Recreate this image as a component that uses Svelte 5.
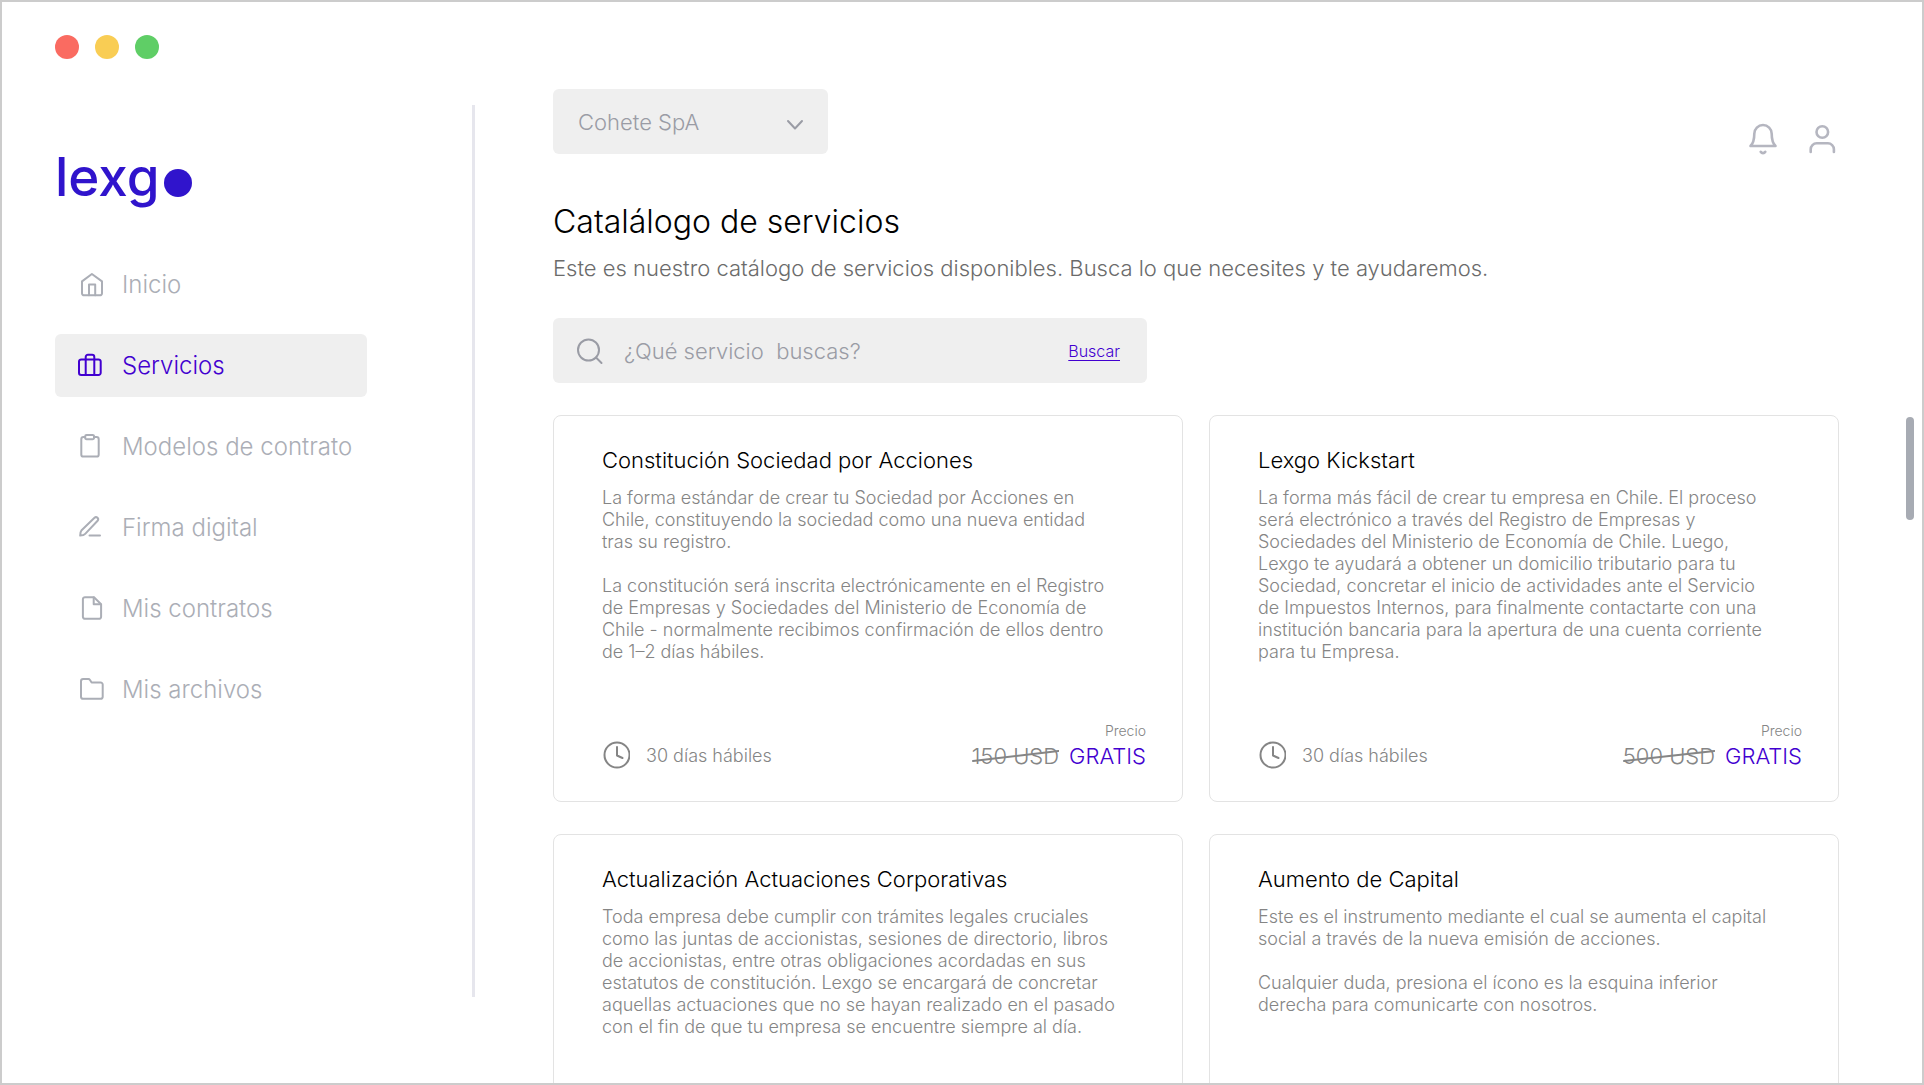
<script lang="ts">
  interface NavItem {
    label: string;
    icon: string[];
  }

  interface Service {
    title: string;
    text: string;
    price: string;
  }

  const navItems: NavItem[] = [
    {
      label: 'Inicio',
      icon: [
        'M4 10.4 13.9 3l10.1 7.4v11.8a2.1 2.1 0 0 1-2.1 2.1H6.1A2.1 2.1 0 0 1 4 22.2z',
        'M11 24.2V13.6h6.2v10.6',
      ],
    },
    {
      label: 'Servicios',
      icon: [
        'M3.2 7.4h17.3a2.2 2.2 0 0 1 2.2 2.2v11.2a2.2 2.2 0 0 1-2.2 2.2H3.2A2.2 2.2 0 0 1 1 20.8V9.6a2.2 2.2 0 0 1 2.2-2.2z',
        'M7.7 23V5a2.2 2.2 0 0 1 2.2-2.2h4.2A2.2 2.2 0 0 1 16.3 5v18',
      ],
    },
    {
      label: 'Modelos de contrato',
      icon: [
        'M16 4.1h2.5a2.2 2.2 0 0 1 2.2 2.2v15.1a2.2 2.2 0 0 1-2.2 2.2h-13a2.2 2.2 0 0 1-2.2-2.2V6.3a2.2 2.2 0 0 1 2.2-2.2h1.7',
        'M8.6 1.9h6a1.4 1.4 0 0 1 1.4 1.4v1.6a1.4 1.4 0 0 1-1.4 1.4h-6a1.4 1.4 0 0 1-1.4-1.4V3.3a1.4 1.4 0 0 1 1.4-1.4z',
      ],
    },
    {
      label: 'Firma digital',
      icon: [
        'M2.2 21.6c.1-2.6.4-4.3 1.4-5.4L16.5 3.7a2.2 2.2 0 0 1 3.1 3.1L7.2 19.9c-1 1.1-2.6 1.6-5 1.7z',
        'M11.5 21.6H22',
      ],
    },
    {
      label: 'Mis contratos',
      icon: [
        'M16 2.2H7a2.1 2.1 0 0 0-2.1 2.1v17.4A2.1 2.1 0 0 0 7 23.8h14a2.1 2.1 0 0 0 2.1-2.1V9.2z',
        'M15.7 2.4v6.8h6.8',
      ],
    },
    {
      label: 'Mis archivos',
      icon: [
        'M22.6 22.8H5.1A2.1 2.1 0 0 1 3 20.7V5.2a2.1 2.1 0 0 1 2.1-2.1h5.2a2 2 0 0 1 1.7.9l1.6 2.5h9a2.1 2.1 0 0 1 2.1 2.1v12.1a2.1 2.1 0 0 1-2.1 2.1z',
      ],
    },
  ];

  const services: Service[] = [
    {
      title: 'Constitución Sociedad por Acciones',
      text: `La forma estándar de crear tu Sociedad por Acciones en
Chile, constituyendo la sociedad como una nueva entidad
tras su registro.

La constitución será inscrita electrónicamente en el Registro
de Empresas y Sociedades del Ministerio de Economía de
Chile - normalmente recibimos confirmación de ellos dentro
de 1–2 días hábiles.`,
      price: '150 USD',
    },
    {
      title: 'Lexgo Kickstart',
      text: `La forma más fácil de crear tu empresa en Chile. El proceso
será electrónico a través del Registro de Empresas y
Sociedades del Ministerio de Economía de Chile. Luego,
Lexgo te ayudará a obtener un domicilio tributario para tu
Sociedad, concretar el inicio de actividades ante el Servicio
de Impuestos Internos, para finalmente contactarte con una
institución bancaria para la apertura de una cuenta corriente
para tu Empresa.`,
      price: '500 USD',
    },
    {
      title: 'Actualización Actuaciones Corporativas',
      text: `Toda empresa debe cumplir con trámites legales cruciales
como las juntas de accionistas, sesiones de directorio, libros
de accionistas, entre otras obligaciones acordadas en sus
estatutos de constitución. Lexgo se encargará de concretar
aquellas actuaciones que no se hayan realizado en el pasado
con el fin de que tu empresa se encuentre siempre al día.`,
      price: '',
    },
    {
      title: 'Aumento de Capital',
      text: `Este es el instrumento mediante el cual se aumenta el capital
social a través de la nueva emisión de acciones.

Cualquier duda, presiona el ícono es la esquina inferior
derecha para comunicarte con nosotros.`,
      price: '',
    },
  ];

  let active = $state('Servicios');
  let query = $state('');
</script>

<div class="window">
  <div class="titlebar">
    <span class="dot red"></span>
    <span class="dot yellow"></span>
    <span class="dot green"></span>
  </div>

  <div class="body">
    <aside class="sidebar">
      <svg class="logo" width="140" height="72" viewBox="0 0 140 72" role="img" aria-label="lexgo">
        <text x="0" y="48">lexg</text>
        <circle cx="123" cy="35" r="14" />
      </svg>
      <nav>
        {#each navItems as item}
          <button class="nav-item" class:active={active === item.label} onclick={() => (active = item.label)}>
            <svg width="28" height="28" viewBox="0 0 28 28" aria-hidden="true">
              {#each item.icon as d}
                <path {d} />
              {/each}
            </svg>
            {item.label}
          </button>
        {/each}
      </nav>
    </aside>

    <main>
      <header class="topbar">
        <div class="company">
          <select aria-label="Empresa">
            <option>Cohete SpA</option>
          </select>
          <svg class="chevron" width="18" height="12" viewBox="0 0 18 12" aria-hidden="true">
            <path d="M2 2l7 7.5L16 2" />
          </svg>
        </div>
        <div class="actions">
          <button class="icon-button" aria-label="Notificaciones">
            <svg width="32" height="34" viewBox="0 0 32 34">
              <path d="M3.5 24h25c-2.8-2.8-3.8-6.5-3.8-12.3a8.7 8.7 0 0 0-17.4 0c0 5.8-1 9.5-3.8 12.3z" />
              <path d="M13.7 29.8a2.7 2.7 0 0 0 4.6 0" />
            </svg>
          </button>
          <button class="icon-button" aria-label="Mi cuenta">
            <svg width="32" height="34" viewBox="0 0 32 34">
              <circle cx="16.3" cy="10" r="5.8" />
              <path d="M4.7 30v-2.7a6 6 0 0 1 6-6h11.2a6 6 0 0 1 6 6V30" />
            </svg>
          </button>
        </div>
      </header>

      <h1>Catalálogo de servicios</h1>
      <p class="lead">Este es nuestro catálogo de servicios disponibles. Busca lo que necesites y te ayudaremos.</p>

      <form class="search" onsubmit={(e) => e.preventDefault()}>
        <svg width="28" height="28" viewBox="0 0 28 28" aria-hidden="true">
          <circle cx="12.5" cy="13" r="10.5" />
          <path d="M20 20.5 25.5 26" />
        </svg>
        <input type="text" bind:value={query} placeholder="¿Qué servicio  buscas?" aria-label="Buscar servicio" />
        <button type="submit">Buscar</button>
      </form>

      <section class="cards">
        {#each services as service}
          <article class="card">
            <h2>{service.title}</h2>
            <p class="text">{service.text}</p>
            {#if service.price}
              <footer>
                <div class="duration">
                  <svg width="28" height="28" viewBox="0 0 28 28" aria-hidden="true">
                    <circle cx="15" cy="14" r="12.5" />
                    <path d="M15 6v8.5l5.5 2.5" />
                  </svg>
                  30 días hábiles
                </div>
                <div class="price">
                  <span class="price-label">Precio</span>
                  <div class="amounts">
                    <span class="old">
                      {service.price}
                      <svg viewBox="0 0 90 12" preserveAspectRatio="none" aria-hidden="true">
                        <path d="M1 11 89 1" />
                      </svg>
                    </span>
                    <span class="new">GRATIS</span>
                  </div>
                </div>
              </footer>
            {/if}
          </article>
        {/each}
      </section>
    </main>

    <div class="scrollbar"></div>
  </div>
</div>

<style>
  :global(body) {
    margin: 0;
    background: #fff;
  }

  .window {
    display: flex;
    flex-direction: column;
    box-sizing: border-box;
    height: 100vh;
    overflow: hidden;
    border: 2px solid #cccccc;
    background: #fff;
    font-family: Inter, 'Liberation Sans', sans-serif;
    font-weight: 300;
  }

  button,
  input,
  select {
    border: none;
    padding: 0;
    background: none;
    font: inherit;
    color: inherit;
    cursor: pointer;
  }

  svg {
    flex: none;
    fill: none;
    stroke: currentColor;
    stroke-width: 2;
    stroke-linecap: round;
    stroke-linejoin: round;
  }

  .titlebar {
    display: flex;
    gap: 16px;
    padding: 33px 53px 30px;
  }

  .dot {
    width: 24px;
    height: 24px;
    border-radius: 50%;
  }

  .red {
    background: #fa6b61;
  }

  .yellow {
    background: #f9cd54;
  }

  .green {
    background: #5fce66;
  }

  .body {
    display: grid;
    grid-template-columns: 473px 1fr 8px;
    grid-template-rows: minmax(0, 1fr);
    flex: 1;
    min-height: 0;
    padding-right: 8px;
  }

  .sidebar {
    box-sizing: border-box;
    margin: 16px 0 86px;
    padding: 43px 105px 0 53px;
    border-right: 3px solid #e6e6ed;
  }

  .logo {
    display: block;
    margin-bottom: 33px;
    overflow: visible;
    fill: #3014cc;
    stroke: none;
    font-size: 53px;
    font-weight: 500;
  }

  nav {
    display: flex;
    flex-direction: column;
    gap: 18px;
  }

  .nav-item {
    display: flex;
    align-items: center;
    gap: 16px;
    height: 63px;
    padding-left: 23px;
    border-radius: 6px;
    color: #abaeb6;
    font-size: 24px;
    white-space: nowrap;
  }

  .nav-item.active {
    background: #efefef;
    color: #4200d0;
  }

  main {
    min-width: 0;
    padding: 0 67px 0 78px;
  }

  .topbar {
    display: flex;
    justify-content: space-between;
    align-items: flex-start;
  }

  .company {
    position: relative;
    width: 275px;
    color: #9a9ca5;
  }

  .company select {
    appearance: none;
    width: 100%;
    height: 65px;
    padding: 0 60px 0 25px;
    border-radius: 6px;
    background: #efefef;
    font-size: 22px;
  }

  .chevron {
    position: absolute;
    top: 30px;
    right: 24px;
    pointer-events: none;
  }

  .actions {
    display: flex;
    gap: 27px;
    padding: 33px 1px 0 0;
    color: #b5b6c0;
  }

  .icon-button svg {
    display: block;
    stroke-width: 2.6;
  }

  h1 {
    margin: 46px 0 0;
    font-size: 32px;
    line-height: 40px;
    font-weight: 300;
    color: #000;
  }

  .lead {
    margin: 12px 0 36px;
    font-size: 22px;
    line-height: 28px;
    color: #6b6b6b;
  }

  .search {
    display: flex;
    align-items: center;
    box-sizing: border-box;
    width: 594px;
    height: 65px;
    padding: 0 27px 0 23px;
    border-radius: 6px;
    background: #efefef;
    color: #9a9ca5;
  }

  .search input {
    flex: 1;
    min-width: 0;
    margin-left: 20px;
    outline: none;
    font-size: 22px;
  }

  .search input::placeholder {
    color: #9a9ca5;
    opacity: 1;
  }

  .search button {
    color: #4200d0;
    font-size: 16px;
    text-decoration: underline;
    text-underline-offset: 3px;
  }

  .cards {
    display: grid;
    grid-template-columns: 1fr 1fr;
    grid-auto-rows: minmax(387px, auto);
    gap: 32px 26px;
    margin-top: 32px;
  }

  .card {
    display: flex;
    flex-direction: column;
    box-sizing: border-box;
    padding: 29px 36px 30px 48px;
    border: 1px solid #e3e3e3;
    border-radius: 8px;
  }

  h2 {
    margin: 0;
    font-size: 22px;
    line-height: 30px;
    font-weight: 300;
    color: #000;
  }

  .text {
    margin: 12px 0 0;
    font-size: 18px;
    line-height: 22px;
    color: #858585;
    white-space: pre-line;
  }

  footer {
    display: flex;
    justify-content: space-between;
    align-items: flex-end;
    margin-top: auto;
    color: #858585;
  }

  .duration {
    display: flex;
    align-items: center;
    gap: 16px;
    padding-bottom: 2px;
    font-size: 18px;
  }

  .price {
    display: flex;
    flex-direction: column;
    align-items: flex-end;
  }

  .price-label {
    font-size: 14px;
    line-height: 20px;
  }

  .amounts {
    display: flex;
    gap: 10px;
    font-size: 22px;
    line-height: 30px;
  }

  .old {
    position: relative;
  }

  .old svg {
    position: absolute;
    top: 9px;
    left: 0;
    width: 100%;
    height: 12px;
  }

  .new {
    color: #4200d0;
  }

  .scrollbar {
    height: 103px;
    margin-top: 328px;
    border-radius: 4px;
    background: #a7abb3;
  }
</style>
